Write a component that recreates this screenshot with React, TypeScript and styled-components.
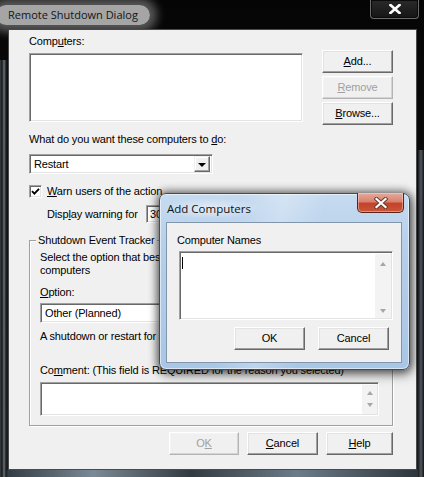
import React from 'react'
import styled, { createGlobalStyle, css } from 'styled-components'

const GlobalStyle = createGlobalStyle`
  html, body {
    margin: 0;
    padding: 0;
    background: #000;
  }
  body {
    font-family: "Liberation Sans", Arial, sans-serif;
    font-size: 11px;
    color: #000;
  }
`

const uiFont = css`
  font-family: "Liberation Sans", Arial, sans-serif;
  font-size: 11px;
  line-height: 13px;
  letter-spacing: -0.15px;
`

const sunken = css`
  box-sizing: border-box;
  background: #fff;
  border: 1px solid;
  border-color: #a0a0a0 #fff #fff #a0a0a0;
  box-shadow: inset 1px 1px #696969, inset -1px -1px #e3e3e3;
`

const Window = styled.div`
  position: relative;
  width: 424px;
  height: 477px;
  box-sizing: border-box;
  padding: 0 7px 7px 8px;
  display: flex;
  flex-direction: column;
  overflow: hidden;
  background:
    linear-gradient(90deg, #3b4044 0px, #16181a 2px, #6a7175 4px, #1b1d1f 6px, transparent 8px) left 60px / 8px 100% no-repeat,
    linear-gradient(90deg, #1b1d1f 0px, #50585e 3px, #101112 6px) right 150px / 6px 100% no-repeat,
    linear-gradient(90deg, #2c353c, #7a8a96 22%, #323a40 45%, #6b7c89 70%, #2b3238) left bottom / 100% 7px no-repeat,
    linear-gradient(180deg, #050505 0%, #0e0e0e 45%, #1b1e21 100%);
`

const TitleBar = styled.div`
  height: 29px;
  display: flex;
  align-items: flex-start;
  justify-content: space-between;
`

const Caption = styled.span`
  margin: 5px 0 0 -12px;
  padding: 2px 12px 2px 12px;
  border-radius: 14px;
  font-family: "Open Sans", "Liberation Sans", sans-serif;
  font-size: 11px;
  line-height: 16px;
  color: #141414;
  background: rgba(205, 205, 205, 0.8);
  box-shadow: 0 0 10px 7px rgba(190, 190, 190, 0.45);
`

const FrameClose = styled.div`
  box-sizing: border-box;
  width: 49px;
  height: 19px;
  margin-right: -2px;
  display: flex;
  align-items: center;
  justify-content: center;
  background: linear-gradient(180deg, #2a2a2a, #151515);
  border: 1px solid #6a6a6a;
  border-top: none;
  border-radius: 0 0 4px 4px;
  box-shadow: inset 0 0 0 1px #0a0a0a;
`

const Client = styled.div`
  flex: 1;
  display: flex;
  flex-direction: column;
  box-sizing: border-box;
  padding: 5px 23px 0 20px;
  background: #f0f0f0;
  border: 1px solid #4a4a4a;
  ${uiFont};
`

const U = styled.span`
  text-decoration: underline;
  text-underline-offset: 1px;
`

const TopSection = styled.div`
  display: grid;
  grid-template-columns: 274px 71px;
  column-gap: 19px;
  align-items: start;
`

const Column = styled.div`
  display: flex;
  flex-direction: column;
`

const Label = styled.div<{ $mt?: number }>`
  margin-top: ${p => p.$mt ?? 0}px;
  height: 13px;
  white-space: nowrap;
`

const ListBox = styled.div<{ $h: number; $mt?: number }>`
  ${sunken};
  margin-top: ${p => p.$mt ?? 5}px;
  height: ${p => p.$h}px;
`

const ButtonStack = styled.div`
  margin-top: 15px;
  display: flex;
  flex-direction: column;
  gap: 3px;
`

const PushButton = styled.div<{ $w?: number; $disabled?: boolean }>`
  box-sizing: border-box;
  width: ${p => p.$w ?? 71}px;
  height: 23px;
  display: flex;
  align-items: center;
  justify-content: center;
  ${uiFont};
  color: ${p => (p.$disabled ? '#a0a0a0' : '#000')};
  background: #f0f0f0;
  border: 1px solid;
  border-color: ${p => (p.$disabled ? '#fff #b4b4b4 #b4b4b4 #fff' : '#fff #696969 #696969 #fff')};
  box-shadow: ${p =>
    p.$disabled ? 'inset -1px -1px #d4d4d4, inset 1px 1px #f4f4f4' : 'inset -1px -1px #a0a0a0, inset 1px 1px #e3e3e3'};
`

const ComboBox = styled.div<{ $w: number; $mt: number }>`
  ${sunken};
  margin-top: ${p => p.$mt}px;
  width: ${p => p.$w}px;
  height: 20px;
  display: flex;
  align-items: center;
  padding: 2px;
`

const ComboText = styled.span`
  flex: 1;
  padding-left: 2px;
  white-space: nowrap;
`

const ComboButton = styled.div`
  box-sizing: border-box;
  width: 16px;
  height: 16px;
  display: flex;
  align-items: center;
  justify-content: center;
  background: #f0f0f0;
  border: 1px solid;
  border-color: #f0f0f0 #696969 #696969 #f0f0f0;
  box-shadow: inset -1px -1px #a0a0a0, inset 1px 1px #fff;
`

const DownTriangle = styled.span`
  width: 0;
  height: 0;
  border-left: 4px solid transparent;
  border-right: 4px solid transparent;
  border-top: 4px solid #000;
  margin-top: 1px;
`

const CheckRow = styled.div`
  margin-top: 11px;
  display: flex;
  align-items: center;
  gap: 5px;
  height: 13px;
`

const CheckBox = styled.div`
  ${sunken};
  width: 13px;
  height: 13px;
  display: flex;
  align-items: center;
  justify-content: center;
`

const IndentRow = styled.div`
  margin-top: 7px;
  padding-left: 18px;
  display: flex;
  align-items: center;
  height: 18px;
  white-space: nowrap;
`

const FixedLabel = styled.span<{ $w: number }>`
  width: ${p => p.$w}px;
  padding-top: 1px;
`

const SpinInput = styled.div`
  ${sunken};
  width: 44px;
  height: 18px;
  padding: 2px 3px;
`

const GroupBox = styled.div`
  margin-top: 17px;
  box-sizing: border-box;
  border: 1px solid #a0a0a0;
  box-shadow: 1px 1px 0 #fff, inset 1px 1px 0 #fff;
  padding: 0 13px 9px 10px;
  display: flex;
  flex-direction: column;
`

const GroupTitle = styled.div`
  align-self: flex-start;
  margin: -7px 0 0 -4px;
  padding: 0 2px;
  height: 13px;
  background: #f0f0f0;
  white-space: nowrap;
`

const Paragraph = styled.div<{ $mt: number }>`
  margin-top: ${p => p.$mt}px;
  white-space: nowrap;
`

const MultiEdit = styled.div<{ $w?: number; $h: number; $mt: number; $ml?: number }>`
  ${sunken};
  margin-top: ${p => p.$mt}px;
  margin-left: ${p => p.$ml ?? 0}px;
  width: ${p => (p.$w ? `${p.$w}px` : 'auto')};
  height: ${p => p.$h}px;
  display: flex;
  padding: 2px 1px 1px 2px;
`

const EditArea = styled.div`
  flex: 1;
`

const Caret = styled.div`
  width: 1px;
  height: 12px;
  margin: 3px 0 0 0;
  background: #000;
`

const ScrollTrack = styled.div<{ $w: number; $pt: number; $pb: number }>`
  width: ${p => p.$w}px;
  display: flex;
  flex-direction: column;
  align-items: center;
  justify-content: space-between;
  padding: ${p => p.$pt}px 0 ${p => p.$pb}px;
  background: #f3f3f3;
`

const ScrollArrow = styled.span<{ $up?: boolean }>`
  width: 0;
  height: 0;
  border-left: 3.5px solid transparent;
  border-right: 3.5px solid transparent;
  ${p => (p.$up ? 'border-bottom: 4px solid #a6a6a6;' : 'border-top: 4px solid #a6a6a6;')}
`

const FooterRow = styled.div`
  margin-top: 6px;
  display: flex;
  justify-content: flex-end;
  gap: 8px;
`

/* Add Computers modal, lying over the main dialog */

const Modal = styled.div`
  position: absolute;
  left: 159px;
  top: 193px;
  width: 251px;
  height: 177px;
  box-sizing: border-box;
  padding: 0 7px 6px 6px;
  display: flex;
  flex-direction: column;
  border: 1px solid #3e4d5c;
  border-radius: 7px;
  background:
    linear-gradient(100deg, rgba(255, 255, 255, 0) 30%, rgba(255, 255, 255, 0.25) 45%, rgba(255, 255, 255, 0) 60%),
    linear-gradient(180deg, #c6dbf0 0%, #b6cfea 30%, #a9c6e6 100%);
  box-shadow: inset 0 0 0 1px rgba(255, 255, 255, 0.55), 0 0 9px 2px rgba(0, 0, 0, 0.55), 2px 5px 12px rgba(0, 0, 0, 0.35);
`

const ModalTitleBar = styled.div`
  height: 28px;
  display: flex;
  align-items: flex-start;
  justify-content: space-between;
`

const ModalCaption = styled.span`
  margin: 4px 0 0 -6px;
  padding: 2px 10px 2px 7px;
  font-family: "Open Sans", "Liberation Sans", sans-serif;
  font-size: 11.5px;
  line-height: 17px;
  color: #111;
  background: radial-gradient(closest-side, rgba(255, 255, 255, 0.55), rgba(255, 255, 255, 0) 100%);
`

const ModalClose = styled.div`
  box-sizing: border-box;
  width: 47px;
  height: 20px;
  margin: -1px -2px 0 0;
  display: flex;
  align-items: center;
  justify-content: center;
  border: 1px solid #5a2318;
  border-top: none;
  border-radius: 0 0 5px 5px;
  background: linear-gradient(180deg, #e6aa9e 0%, #d7836f 45%, #c5432a 55%, #c9553a 100%);
  box-shadow: inset 0 0 0 1px rgba(255, 220, 210, 0.45);
`

const ModalClient = styled.div`
  flex: 1;
  box-sizing: border-box;
  display: flex;
  flex-direction: column;
  padding: 11px 0 0 10px;
  background: #f0f0f0;
  border: 1px solid #8195ab;
  ${uiFont};
`

const ModalButtons = styled.div`
  margin: 7px 12px 0 0;
  display: flex;
  justify-content: flex-end;
  gap: 13px;
`

function CheckGlyph() {
  return (
    <svg width="9" height="9" viewBox="0 0 9 9">
      <path d="M1 4.2 L3.4 6.6 L8 1.8" fill="none" stroke="#000" strokeWidth="1.9" />
    </svg>
  )
}

function FrameX() {
  return (
    <svg width="12" height="10" viewBox="0 0 12 10">
      <path d="M1.5 1 L10.5 9 M10.5 1 L1.5 9" stroke="#fff" strokeWidth="2.6" strokeLinecap="square" />
    </svg>
  )
}

function ModalX() {
  return (
    <svg width="14" height="12" viewBox="0 0 14 12">
      <path d="M2.5 2 L11.5 10 M11.5 2 L2.5 10" stroke="#6b3a30" strokeWidth="4.2" strokeLinecap="square" />
      <path d="M2.5 2 L11.5 10 M11.5 2 L2.5 10" stroke="#fff" strokeWidth="2.2" strokeLinecap="square" />
    </svg>
  )
}

export default function App() {
  return (
    <>
      <GlobalStyle />
      <Window>
        <TitleBar>
          <Caption>Remote Shutdown Dialog</Caption>
          <FrameClose>
            <FrameX />
          </FrameClose>
        </TitleBar>

        <Client>
          <TopSection>
            <Column>
              <Label>
                Comp<U>u</U>ters:
              </Label>
              <ListBox $h={69} />
            </Column>
            <ButtonStack>
              <PushButton>
                <U>A</U>dd...
              </PushButton>
              <PushButton $disabled>
                <U>R</U>emove
              </PushButton>
              <PushButton>
                <U>B</U>rowse...
              </PushButton>
            </ButtonStack>
          </TopSection>

          <Label $mt={8}>
            What do you want these computers to <U>d</U>o:
          </Label>
          <ComboBox $w={184} $mt={8}>
            <ComboText>Restart</ComboText>
            <ComboButton>
              <DownTriangle />
            </ComboButton>
          </ComboBox>

          <CheckRow>
            <CheckBox>
              <CheckGlyph />
            </CheckBox>
            <span>
              <U>W</U>arn users of the action
            </span>
          </CheckRow>

          <IndentRow>
            <FixedLabel $w={99}>
              Disp<U>l</U>ay warning for
            </FixedLabel>
            <SpinInput>30</SpinInput>
          </IndentRow>

          <GroupBox>
            <GroupTitle>Shutdown Event Tracker</GroupTitle>
            <Paragraph $mt={4}>
              Select the option that best describes why you want to shut down the
              <br />
              computers
            </Paragraph>
            <Paragraph $mt={9}>
              <U>O</U>ption:
            </Paragraph>
            <ComboBox $w={338} $mt={4}>
              <ComboText>Other (Planned)</ComboText>
              <ComboButton>
                <DownTriangle />
              </ComboButton>
            </ComboBox>
            <Paragraph $mt={7}>A shutdown or restart for an unknown reason</Paragraph>
            <Paragraph $mt={21}>
              Co<U>m</U>ment: (This field is REQUIRED for the reason you selected)
            </Paragraph>
            <MultiEdit $h={34} $mt={5}>
              <EditArea />
              <ScrollTrack $w={15} $pt={6} $pb={7}>
                <ScrollArrow $up />
                <ScrollArrow />
              </ScrollTrack>
            </MultiEdit>
          </GroupBox>

          <FooterRow>
            <PushButton $w={70} $disabled>
              O<U>K</U>
            </PushButton>
            <PushButton $w={71}>
              <U>C</U>ancel
            </PushButton>
            <PushButton $w={67}>
              <U>H</U>elp
            </PushButton>
          </FooterRow>
        </Client>

        <Modal>
          <ModalTitleBar>
            <ModalCaption>Add Computers</ModalCaption>
            <ModalClose>
              <ModalX />
            </ModalClose>
          </ModalTitleBar>
          <ModalClient>
            <Label>Computer Names</Label>
            <MultiEdit $w={214} $h={69} $mt={4} $ml={2}>
              <EditArea>
                <Caret />
              </EditArea>
              <ScrollTrack $w={16} $pt={8} $pb={5}>
                <ScrollArrow $up />
                <ScrollArrow />
              </ScrollTrack>
            </MultiEdit>
            <ModalButtons>
              <PushButton>OK</PushButton>
              <PushButton>Cancel</PushButton>
            </ModalButtons>
          </ModalClient>
        </Modal>
      </Window>
    </>
  )
}
